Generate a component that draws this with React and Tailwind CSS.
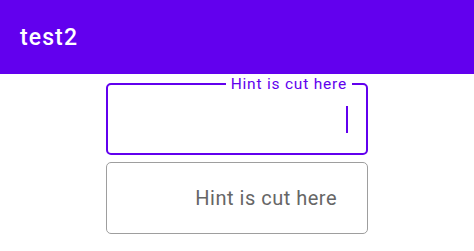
export default function App() {
  return (
    <div className="w-[474px] h-[251px] bg-white overflow-hidden" style={{ fontFamily: 'Roboto, "Noto Sans", sans-serif' }}>
      <div className="h-[74px] bg-[#6200ee] flex items-center pl-[20px]">
        <span className="text-white text-[23px] font-medium leading-none tracking-[1.1px]">test2</span>
      </div>
      <div className="flex flex-col items-center pt-[9px] gap-[7px]">
        <div className="relative w-[262px] h-[72px] border-2 border-[#6200ee] rounded-[5px] flex items-center justify-end pr-[18px]">
          <span className="absolute right-[14px] top-[-11px] bg-white px-[5px] text-[15.5px] leading-[20px] text-[#6200ee] tracking-[0.8px]">Hint is cut here</span>
          <div className="w-[2px] h-[27px] bg-[#6200ee]"></div>
        </div>
        <div className="w-[262px] h-[72px] border border-[#9e9e9e] rounded-[5px] flex items-center justify-end pr-[30px]">
          <span className="text-[20px] leading-none text-[#666666] tracking-[0.5px]">Hint is cut here</span>
        </div>
      </div>
    </div>
  );
}
